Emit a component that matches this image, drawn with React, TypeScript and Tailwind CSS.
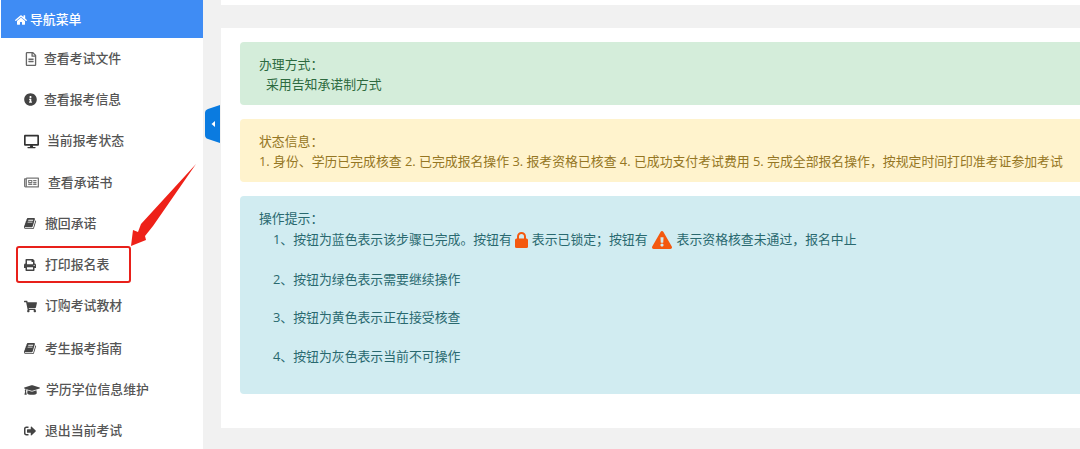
import React from 'react';
import {
  FaDesktop,
  FaExclamationTriangle,
  FaGraduationCap,
  FaHome,
  FaInfoCircle,
  FaPrint,
  FaRegFileAlt,
  FaRegNewspaper,
  FaShoppingCart,
  FaSignOutAlt,
} from 'react-icons/fa';

// the slanted Font Awesome 4 book, react-icons only has the upright one
function BookIcon({ size, className }: { size: number; className?: string }) {
  return (
    <svg width={size} height={size} viewBox="0 0 1792 1792" fill="currentColor" className={className}>
      <path d="M1639 478q40 57 18 129l-275 906q-19 64-76.5 107.5t-122.5 43.5h-923q-77 0-148.5-53.5t-99.5-131.5q-24-67-2-127 0-4 3-27t4-37q1-8-3-21.5t-3-19.5q2-11 8-21t16.5-23.5 16.5-23.5q23-38 45-91.5t30-91.5q3-10 .5-30t-.5-28q3-11 17-28t17-23q21-36 42-92t25-90q1-9-2.5-32t.5-28q4-13 22-30.5t22-22.5q19-26 42.5-84.5t27.5-96.5q1-8-3-25.5t-2-26.5q2-8 9-18t18-23 17-21q8-12 16.5-30.5t15-35 16-36 19.5-32 26.5-23.5 36-11.5 47.5 5.5l-1 3q38-9 51-9h761q74 0 114 56t18 130l-274 906q-36 119-71.5 153.5t-128.5 34.5h-869q-27 0-38 15-11 16-1 43 24 70 144 70h923q29 0 56-15.5t35-41.5l300-987q7-22 5-57 38 15 59 43zm-1064 2q-4 13 2 22.5t20 9.5h608q13 0 25.5-9.5t16.5-22.5l21-64q4-13-2-22.5t-20-9.5h-608q-13 0-25.5 9.5t-16.5 22.5zm-83 256q-4 13 2 22.5t20 9.5h608q13 0 25.5-9.5t16.5-22.5l21-64q4-13-2-22.5t-20-9.5h-608q-13 0-25.5 9.5t-16.5 22.5z" />
    </svg>
  );
}

function LockIcon() {
  return (
    <svg width="13" height="16" viewBox="0 0 13 16" className="ml-[3px] mr-[4px] shrink-0 text-[#f4590f]">
      <path d="M3 7V4.5a3.5 3.5 0 0 1 7 0V7" fill="none" stroke="currentColor" strokeWidth="2" />
      <rect x="0" y="6.5" width="13" height="9.5" rx="1.5" fill="currentColor" />
    </svg>
  );
}

const menu = [
  { label: '查看考试文件', icon: FaRegFileAlt, box: 'w-[20px]', size: 14, row: 'h-[41px]', tone: 'text-[#666]' },
  { label: '查看报考信息', icon: FaInfoCircle, box: 'w-[20px]', size: 13, row: 'h-[41px]', tone: 'text-[#444]' },
  { label: '当前报考状态', icon: FaDesktop, box: 'w-[23px]', size: 15, row: 'h-[42px]', tone: 'text-[#333]' },
  { label: '查看承诺书', icon: FaRegNewspaper, box: 'w-[24px]', size: 15, row: 'h-[41px]', tone: 'text-[#777]' },
  { label: '撤回承诺', icon: BookIcon, box: 'w-[21px]', size: 13, row: 'h-[41px]', tone: 'text-[#444]' },
  { label: '打印报名表', icon: FaPrint, box: 'w-[21px]', size: 12, row: 'h-[41px]', tone: 'text-[#444]', active: true },
  { label: '订购考试教材', icon: FaShoppingCart, box: 'w-[21px]', size: 13, row: 'h-[42px]', tone: 'text-[#444]' },
  { label: '考生报考指南', icon: BookIcon, box: 'w-[21px]', size: 13, row: 'mt-px h-[41px]', tone: 'text-[#444]' },
  { label: '学历学位信息维护', icon: FaGraduationCap, box: 'w-[22px]', size: 16, row: 'h-[41px]', tone: 'text-[#444]' },
  { label: '退出当前考试', icon: FaSignOutAlt, box: 'w-[21px]', size: 12, row: 'h-[41px]', tone: 'text-[#444]' },
];

const tips = ['2、按钮为绿色表示需要继续操作', '3、按钮为黄色表示正在接受核查', '4、按钮为灰色表示当前不可操作'];

export default function App() {
  return (
    <div className="flex h-[449px] w-[1080px] overflow-hidden bg-white text-[12.87px] font-['Open_Sans','Noto_Sans_CJK_SC',sans-serif]">
      {/* sidebar */}
      <aside className="relative ml-px w-[202px] shrink-0 bg-white">
        <div className="flex h-[38px] items-center gap-[3px] bg-[#3f8cf4] pl-[14px] pt-px font-medium text-white">
          <FaHome size={12} />
          <span>导航菜单</span>
        </div>
        <ul className="text-[#555]">
          {menu.map((item) => (
            <li key={item.label} className={`relative flex items-center pl-[23px] ${item.row}`}>
              <span className={`shrink-0 ${item.box} ${item.tone}`}>
                <item.icon size={item.size} />
              </span>
              <span className="font-medium">{item.label}</span>
              {item.active && (
                <span className="absolute left-[15px] top-[2px] h-[37px] w-[115px] rounded-[3px] border-[2.5px] border-[#e8201a]" />
              )}
            </li>
          ))}
        </ul>
      </aside>

      {/* main */}
      <main className="relative flex-1 bg-[#f1f1f1] pl-[18px]">
        <div className="h-[5px] bg-white" />
        <section className="mt-[23px] flex h-[400px] flex-col gap-[14px] bg-white pl-[19px] pt-[14px]">
          <div className="h-[63px] w-[860px] rounded-l-[4px] bg-[#d4edda] pl-[19px] pt-[12px] leading-[20px] text-[#2d6a3e]">
            <p>办理方式：</p>
            <p className="pl-[7px]">采用告知承诺制方式</p>
          </div>
          <div className="h-[63px] w-[860px] whitespace-nowrap rounded-l-[4px] bg-[#fff3cd] pl-[19px] pt-[12px] leading-[20px] text-[#957623]">
            <p>状态信息：</p>
            <p>1. 身份、学历已完成核查 2. 已完成报名操作 3. 报考资格已核查 4. 已成功支付考试费用 5. 完成全部报名操作，按规定时间打印准考证参加考试</p>
          </div>
          <div className="h-[198px] w-[860px] whitespace-nowrap rounded-l-[4px] bg-[#d1ecf1] pl-[19px] pt-[12px] text-[#29696f]">
            <p className="leading-[20px]">操作提示：</p>
            <div className="flex h-[24px] items-center pl-[14px]">
              <span>1、按钮为蓝色表示该步骤已完成。按钮有</span>
              <LockIcon />
              <span>表示已锁定；按钮有</span>
              <FaExclamationTriangle size={20} className="ml-[4px] mr-[5px] shrink-0 text-[#f4590f]" />
              <span>表示资格核查未通过，报名中止</span>
            </div>
            {tips.map((tip) => (
              <p key={tip} className="mt-[14.5px] pl-[14px] leading-[24px]">{tip}</p>
            ))}
          </div>
        </section>

        {/* collapse tab */}
        <svg className="absolute left-[2px] top-[105px]" width="15" height="38" viewBox="0 0 15 38">
          <path d="M15 0 L3 4 Q0 5 0 8 V30 Q0 33 3 34 L15 38 Z" fill="#0a7be0" />
          <path d="M10 16 L6.5 19 L10 22 Z" fill="#fff" />
        </svg>
      </main>

      {/* callout arrow */}
      <svg className="absolute left-0 top-0" width="1080" height="449" viewBox="0 0 1080 449" fill="none">
        <path d="M196 164 L153 226 L145 236 L146 240 L131 246 L133 230 L138 232 L141 224 Z" fill="#ee2118" />
      </svg>
    </div>
  );
}
